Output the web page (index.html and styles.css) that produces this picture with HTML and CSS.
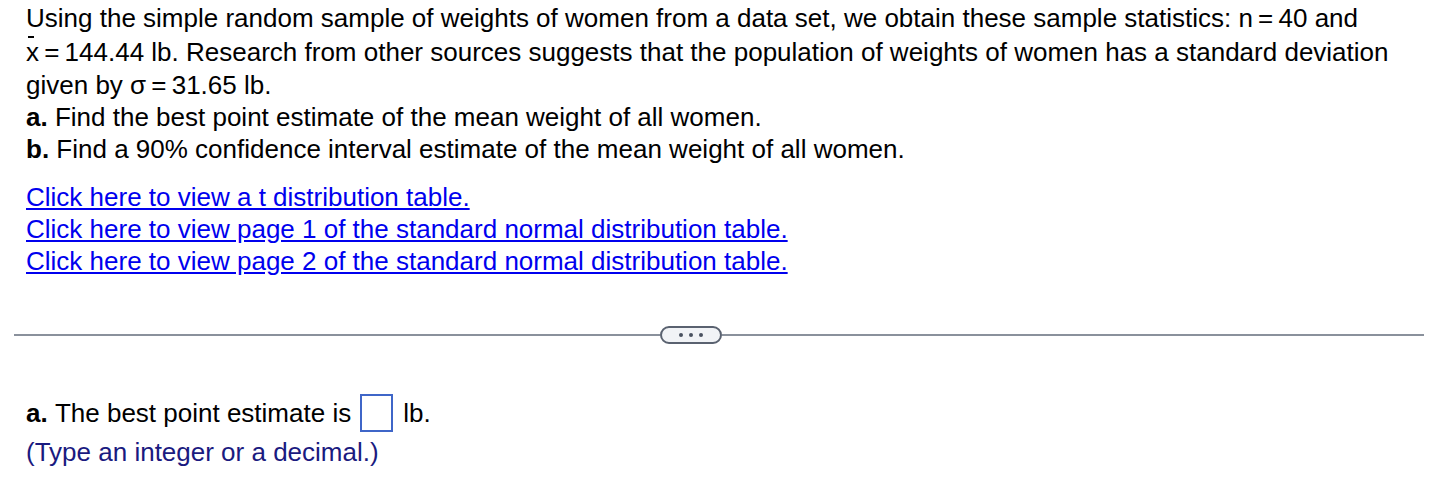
FILE: index.html
```html
<!DOCTYPE html>
<html>
<head>
<meta charset="utf-8">
<link rel="stylesheet" href="styles.css">
</head>
<body>
<div class="page">
  <div class="question">
    <p class="line tall">Using the simple random sample of weights of women from a data set, we obtain these sample statistics: n&#8201;=&#8201;40 and</p>
    <p class="line tall"><span class="xbar">x</span>&#8201;=&#8201;144.44 lb. Research from other sources suggests that the population of weights of women has a standard deviation</p>
    <p class="line">given by σ&#8201;=&#8201;31.65 lb.</p>
    <p class="line"><b>a.</b> Find the best point estimate of the mean weight of all women.</p>
    <p class="line"><b>b.</b> Find a 90% confidence interval estimate of the mean weight of all women.</p>
  </div>
  <div class="links">
    <a href="#" class="link">Click here to view a t distribution table.</a>
    <a href="#" class="link">Click here to view page 1 of the standard normal distribution table.</a>
    <a href="#" class="link">Click here to view page 2 of the standard normal distribution table.</a>
  </div>
  <div class="divider">
    <div class="rule rule-left"></div>
    <div class="pill"><span class="dot"></span><span class="dot"></span><span class="dot"></span></div>
    <div class="rule"></div>
  </div>
  <div class="answer">
    <p class="line answer-line"><b>a.</b>&nbsp;The best point estimate is <span class="box"></span> lb.</p>
    <p class="line hint">(Type an integer or a decimal.)</p>
  </div>
</div>
</body>
</html>
```
FILE: styles.css
```css
html, body {
  margin: 0;
  padding: 0;
  background: #ffffff;
}
body {
  font-family: "Liberation Sans", Arial, sans-serif;
  font-size: 26px;
  color: #000;
}
.page {
  padding: 1px 10px 0 26px;
}
.line {
  margin: 0;
  line-height: 32px;
  white-space: nowrap;
}
.line.tall {
  line-height: 34px;
}
.xbar {
  position: relative;
}
.xbar::before {
  content: "";
  position: absolute;
  left: 2px;
  right: 5px;
  top: -1px;
  height: 2px;
  background: #000;
}
.links {
  display: flex;
  flex-direction: column;
  align-items: flex-start;
  margin-top: 16px;
}
.link {
  color: #0000ee;
  text-decoration: underline;
  text-underline-offset: 2px;
  line-height: 32px;
}
.divider {
  display: flex;
  align-items: center;
  margin: 48px 0 0 -12px;
  height: 20px;
}
.rule {
  flex: 1;
  height: 2px;
  background: #8a919c;
}
.rule-left {
  flex: 0 0 646px;
}
.pill {
  box-sizing: border-box;
  width: 62px;
  height: 18px;
  border: 2px solid #5a6270;
  border-radius: 10px;
  background: #f1f3f6;
  display: flex;
  align-items: center;
  justify-content: center;
  gap: 6px;
}
.dot {
  width: 4px;
  height: 4px;
  border-radius: 50%;
  background: #4a5260;
}
.answer {
  margin-top: 48px;
}
.answer-line {
  display: flex;
  align-items: center;
  line-height: 40px;
}
.box {
  display: inline-block;
  box-sizing: border-box;
  width: 33px;
  height: 38px;
  border: 2px solid #3f66c8;
  margin: 0 10px 0 9px;
}
.hint {
  color: #1a1a80;
  line-height: 38px;
}
```
